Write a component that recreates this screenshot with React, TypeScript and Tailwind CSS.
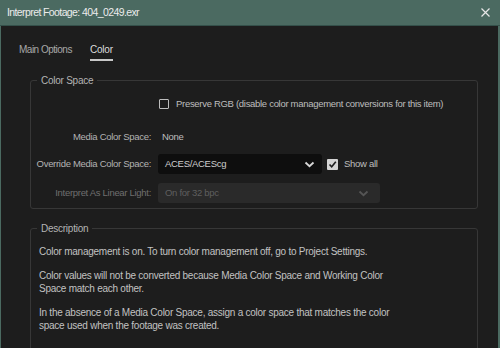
import React from "react";

const font = { fontFamily: "'Liberation Sans', Arial, sans-serif" };

function Chevron({ color }: { color: string }) {
  return (
    <svg width="11" height="7" viewBox="0 0 11 7" fill="none">
      <path d="M1.5 1.5 L5.5 5.2 L9.5 1.5" stroke={color} strokeWidth="1.8" />
    </svg>
  );
}

function Label({ children, dim }: { children: React.ReactNode; dim?: boolean }) {
  return (
    <div className={`whitespace-nowrap text-right ${dim ? "text-[#6f6f6f]" : "text-[#b4b4b4]"}`}>{children}</div>
  );
}

export default function App() {
  return (
    <div
      className="w-[500px] h-[348px] overflow-hidden bg-[#4b6a61] text-[10px] tracking-[-0.25px]"
      style={font}
    >
      {/* Title bar */}
      <div className="h-[25px] flex items-center justify-between pl-[7px] pr-[10px]">
        <span className="text-[10.5px] tracking-[-0.6px] text-[#ececec]">Interpret Footage: 404_0249.exr</span>
        <svg width="9" height="9" viewBox="0 0 9 9">
          <path d="M0.5 0.5 L8.5 8.5 M8.5 0.5 L0.5 8.5" stroke="#e6e6e6" strokeWidth="1.2" />
        </svg>
      </div>
      <div className="h-[1px] bg-[#34504a]" />

      <div className="ml-[1px] mr-[2px] h-[322px] bg-[#1d1d1d]">
        {/* Tabs */}
        <div className="flex pl-[18px] pt-[16px] gap-[18px] tracking-[-0.5px]">
          <span className="text-[#a8a8a8]">Main Options</span>
          <span className="text-[#dcdcdc] border-b-2 border-[#c8c8c8] pb-[2px] tracking-[-0.2px]">Color</span>
        </div>

        {/* Color Space */}
        <fieldset className="ml-[29px] mr-[20px] mt-[12px] h-[136px] border border-[#373737] rounded-[3px]">
          <legend className="ml-[6px] px-[4px] text-[#b4b4b4]">Color Space</legend>
          <div className="grid grid-cols-[120px_1fr] gap-x-[7px] text-[9.5px] tracking-[-0.3px]">
            <div className="h-[24px] mt-[4px]" />
            <div className="h-[24px] mt-[4px] flex items-center pl-[1px] whitespace-nowrap">
              <div className="w-[10px] h-[10px] border border-[#bdbdbd] rounded-[1px]" />
              <span className="ml-[7px] text-[#bdbdbd]">
                Preserve RGB (disable color management conversions for this item)
              </span>
            </div>

            <div className="h-[24px] mt-[9px] flex items-center justify-end">
              <Label>Media Color Space:</Label>
            </div>
            <div className="h-[24px] mt-[9px] flex items-center pl-[4px] text-[#bdbdbd]">None</div>

            <div className="h-[20px] mt-[5px] flex items-center justify-end">
              <Label>Override Media Color Space:</Label>
            </div>
            <div className="h-[20px] mt-[5px] flex items-center">
              <div className="w-[164px] h-[20px] bg-[#0e0e0e] rounded-[3px] flex items-center justify-between pl-[7px] pr-[7px]">
                <span className="text-[#cfcfcf]">ACES/ACEScg</span>
                <Chevron color="#d8d8d8" />
              </div>
              <div className="ml-[5px] w-[11px] h-[11px] bg-[#d4d4d4] rounded-[1px] flex items-center justify-center">
                <svg width="9" height="9" viewBox="0 0 9 9">
                  <path d="M1.5 4.5 L3.7 6.8 L7.8 1.8" stroke="#1d1d1d" strokeWidth="1.6" fill="none" />
                </svg>
              </div>
              <span className="ml-[6px] text-[#bdbdbd] whitespace-nowrap">Show all</span>
            </div>

            <div className="h-[20px] mt-[9px] flex items-center justify-end">
              <Label dim>Interpret As Linear Light:</Label>
            </div>
            <div className="h-[20px] mt-[9px] flex items-center">
              <div className="w-[222px] h-[20px] bg-[#2a2a2a] rounded-[3px] flex items-center justify-between pl-[7px] pr-[11px]">
                <span className="text-[#5f5f5f]">On for 32 bpc</span>
                <Chevron color="#555555" />
              </div>
            </div>
          </div>
        </fieldset>

        {/* Description */}
        <fieldset className="ml-[29px] mr-[20px] mt-[12px] h-[140px] border border-[#373737] rounded-[3px] px-[8px]">
          <legend className="ml-[-2px] px-[4px] text-[#b4b4b4]">Description</legend>
          <div className="mt-[9px] leading-[13px] text-[#c2c2c2] flex flex-col gap-[11px] whitespace-nowrap">
            <p>Color management is on. To turn color management off, go to Project Settings.</p>
            <p>
              Color values will not be converted because Media Color Space and Working Color
              <br />
              Space match each other.
            </p>
            <p>
              In the absence of a Media Color Space, assign a color space that matches the color
              <br />
              space used when the footage was created.
            </p>
          </div>
        </fieldset>
      </div>
    </div>
  );
}
